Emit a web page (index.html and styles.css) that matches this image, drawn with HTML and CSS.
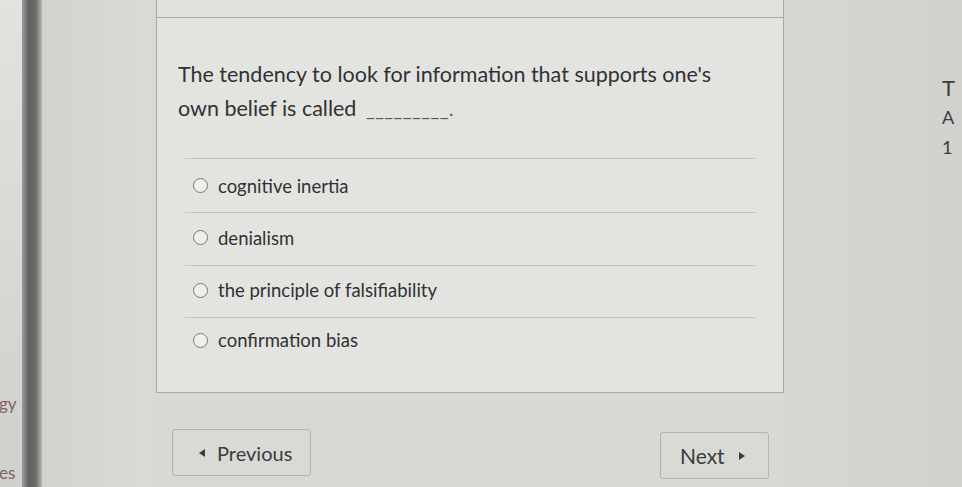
FILE: index.html
```html
<!DOCTYPE html>
<html lang="en">
<head>
<meta charset="utf-8">
<title>Quiz</title>
<link rel="stylesheet" href="styles.css">
</head>
<body>
<div class="page">
  <aside class="sidebar">
    <div class="edge">
      <span class="nav-frag nav-gy">gy</span>
      <span class="nav-frag nav-es">es</span>
    </div>
    <div class="band"></div>
    <div class="panel"></div>
  </aside>
  <main class="main">
    <section class="card">
      <div class="card-head"></div>
      <div class="card-body">
        <p class="question">The tendency to look for information that supports one's<br>own belief is called <span class="blank">_________.</span></p>
        <ul class="answers">
          <li class="answer"><span class="radio"></span><span class="label">cognitive inertia</span></li>
          <li class="answer"><span class="radio"></span><span class="label">denialism</span></li>
          <li class="answer"><span class="radio"></span><span class="label">the principle of falsifiability</span></li>
          <li class="answer"><span class="radio"></span><span class="label">confirmation bias</span></li>
        </ul>
      </div>
    </section>
    <nav class="pager">
      <button class="btn btn-prev"><span class="tri tri-left"></span>Previous</button>
      <button class="btn btn-next">Next<span class="tri tri-right"></span></button>
    </nav>
  </main>
  <aside class="info">
    <div class="info-title">T</div>
    <div class="info-line">A</div>
    <div class="info-line">1</div>
  </aside>
</div>
</body>
</html>
```
FILE: styles.css
```css
* { box-sizing: border-box; }
html, body {
  margin: 0;
  padding: 0;
  width: 962px;
  height: 487px;
  overflow: hidden;
  background: #d4d5d1;
  font-family: Lato, "Open Sans", "Liberation Sans", sans-serif;
  color: #34373a;
}
.page {
  display: flex;
  width: 962px;
  height: 487px;
}
.sidebar {
  display: flex;
  width: 152px;
  flex: none;
  height: 100%;
}
.edge {
  width: 22px;
  background: linear-gradient(#e2e2df, #cfd0cc);
  display: flex;
  flex-direction: column;
  overflow: hidden;
  padding-top: 393px;
  font-size: 17px;
  color: #7d655d;
}
.nav-frag { margin-left: -1px; line-height: 22px; }
.nav-es { margin-top: 47px; }
.band {
  width: 20px;
  background: linear-gradient(90deg, #9c9d9b 0%, #5e5f5e 35%, #6e6f6d 70%, #b5b6b3 100%);
}
.panel {
  flex: 1;
  background: linear-gradient(90deg, #d2d3cf, #dadbd7);
}
.main {
  width: 632px;
  flex: none;
  display: flex;
  flex-direction: column;
  background: #d8d9d5;
}
.card {
  margin: 0 0 0 4px;
  width: 628px;
  border: 1px solid #a9aaa7;
  border-top: none;
  background: #e3e4e0;
}
.card-head {
  height: 18px;
  border-bottom: 1px solid #a9aaa7;
  background: #e0e1dd;
}
.card-body {
  padding: 39px 28px 24px 21px;
}
.question {
  margin: 0 0 32px 0;
  font-size: 21.5px;
  line-height: 34px;
  color: #2f3235;
  white-space: nowrap;
}
.blank { margin-left: 4px; letter-spacing: 0.5px; font-size: 19px; color: #55585a; }
.answers {
  list-style: none;
  margin: 0 0 0 7px;
  padding: 0;
}
.answer {
  display: flex;
  align-items: center;
  height: 52px;
  border-top: 1px solid #c4c5c1;
  padding-left: 8px;
  padding-bottom: 3px;
  font-size: 18.5px;
}
.answer:first-child { height: 54px; padding-bottom: 0; }
.answer:nth-child(2) { height: 53px; }
.answer:last-child { height: 51px; padding-bottom: 6px; }
.radio {
  width: 15px;
  height: 15px;
  border: 1.5px solid #777;
  border-radius: 50%;
  background: #efefec;
  margin-right: 10px;
  flex: none;
}
.label { color: #2f3235; }
.pager {
  display: flex;
  justify-content: space-between;
  padding: 36px 15px 0 20px;
}
.btn {
  font-family: inherit;
  font-size: 20px;
  color: #3a3c3e;
  background: #d9dad6;
  border: 1px solid #b3b4b1;
  border-radius: 3px;
  height: 47px;
  display: flex;
  align-items: center;
  cursor: pointer;
}
.btn-prev { width: 139px; padding-left: 26px; }
.btn-next { width: 109px; padding-left: 19px; margin-top: 3px; font-size: 21px; }
.tri {
  display: inline-block;
  width: 0;
  height: 0;
  border-top: 4px solid transparent;
  border-bottom: 4px solid transparent;
}
.tri-left { border-right: 6px solid #3a3c3e; margin-right: 12px; }
.tri-right { border-left: 6px solid #3a3c3e; margin-left: 14px; }
.info {
  flex: 1;
  overflow: hidden;
  padding: 74px 0 0 158px;
  white-space: nowrap;
  background: linear-gradient(90deg, #d6d7d3, #d1d2ce);
  color: #3a3c3e;
}
.info-title { font-size: 22px; line-height: 28px; }
.info-line { font-size: 18px; line-height: 30px; }
```
